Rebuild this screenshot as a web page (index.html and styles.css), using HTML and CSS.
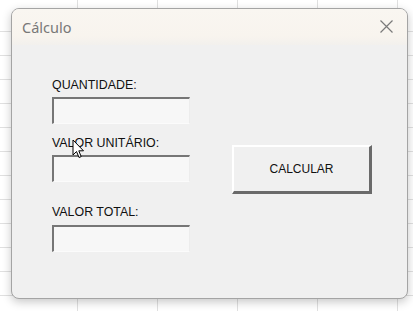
FILE: index.html
```html
<!DOCTYPE html>
<html lang="pt">
<head>
<meta charset="utf-8">
<title>Cálculo</title>
<link rel="stylesheet" href="styles.css">
</head>
<body>
<div class="dialog">
  <div class="titlebar">
    <span class="title">Cálculo</span>
    <svg class="close" width="13" height="13" viewBox="0 0 13 13"><path d="M0.5 0.5 L12.5 12.5 M12.5 0.5 L0.5 12.5" stroke="#7a7a7a" stroke-width="1.2" fill="none"/></svg>
  </div>
  <div class="content">
    <div class="form">
      <div class="field">
        <label class="label">QUANTIDADE:</label>
        <div class="textbox"></div>
      </div>
      <div class="field field-2">
        <label class="label">VALOR UNITÁRIO:</label>
        <div class="textbox"></div>
      </div>
      <div class="field field-3">
        <label class="label">VALOR TOTAL:</label>
        <div class="textbox"></div>
      </div>
    </div>
    <div class="actions">
      <div class="button">CALCULAR</div>
    </div>
  </div>
</div>
<svg class="cursor" width="13" height="20" viewBox="0 0 13 20"><path d="M1 1 L1 16 L4.5 12.5 L7 18.5 L9.2 17.6 L6.8 11.8 L11.5 11.8 Z" fill="#ffffff" stroke="#000000" stroke-width="1" stroke-linejoin="round"/></svg>
</body>
</html>
```
FILE: styles.css
```css
html, body {
  margin: 0;
  padding: 0;
}
body {
  width: 413px;
  height: 311px;
  overflow: hidden;
  position: relative;
  background-color: #ffffff;
  background-image:
    repeating-linear-gradient(to right, transparent 0, transparent 77px, #e0e0e0 77px, #e0e0e0 78px, transparent 78px, transparent 80px),
    repeating-linear-gradient(to bottom, transparent 0, transparent 23px, #e0e0e0 23px, #e0e0e0 24px);
  background-position: 0 0, 0 8px;
  font-family: "Liberation Sans", Arial, sans-serif;
  padding-top: 8px;
  padding-left: 11px;
  box-sizing: border-box;
}
.dialog {
  width: 397px;
  height: 291px;
  box-sizing: border-box;
  border: 1px solid #a4a4a4;
  border-radius: 8px;
  overflow: hidden;
  background: #f0f0f0;
  box-shadow: 0 3px 10px rgba(0, 0, 0, 0.22);
  display: flex;
  flex-direction: column;
}
.titlebar {
  height: 36px;
  flex: none;
  display: flex;
  align-items: center;
  justify-content: space-between;
  padding: 0 14px 0 10px;
  background: linear-gradient(to bottom, #f9f6f1 0, #f8f4ee 75%, #f2f0ed 100%);
}
.title {
  font-family: "Noto Sans", "Open Sans", sans-serif;
  font-size: 14.5px;
  color: #787878;
  margin-top: -1px;
}
.close {
  display: block;
  margin-top: -1px;
}
.content {
  display: flex;
  padding: 33px 0 0 40px;
}
.form {
  display: flex;
  flex-direction: column;
  width: 138px;
}
.field {
  display: flex;
  flex-direction: column;
  gap: 5px;
}
.field-2 {
  margin-top: 12px;
  gap: 5px;
}
.field-3 {
  margin-top: 23px;
  gap: 6px;
}
.label {
  font-size: 12.4px;
  line-height: 14px;
  color: #111111;
}
.textbox {
  height: 27px;
  box-sizing: border-box;
  background: #f7f7f7;
  border-top: 2px solid #767676;
  border-left: 2px solid #767676;
  border-right: 1px solid #ececec;
  border-bottom: 1px solid #fbfbfb;
}
.actions {
  margin-left: 42px;
  padding-top: 67px;
}
.button {
  width: 140px;
  height: 49px;
  box-sizing: border-box;
  background: #f0f0f0;
  border-top: 2px solid #ffffff;
  border-left: 2px solid #ffffff;
  border-right: 3px solid #6a6a6a;
  border-bottom: 3px solid #6a6a6a;
  display: flex;
  align-items: center;
  justify-content: center;
  font-size: 12px;
  color: #111111;
}
.cursor {
  position: absolute;
  left: 72px;
  top: 139px;
}
```
